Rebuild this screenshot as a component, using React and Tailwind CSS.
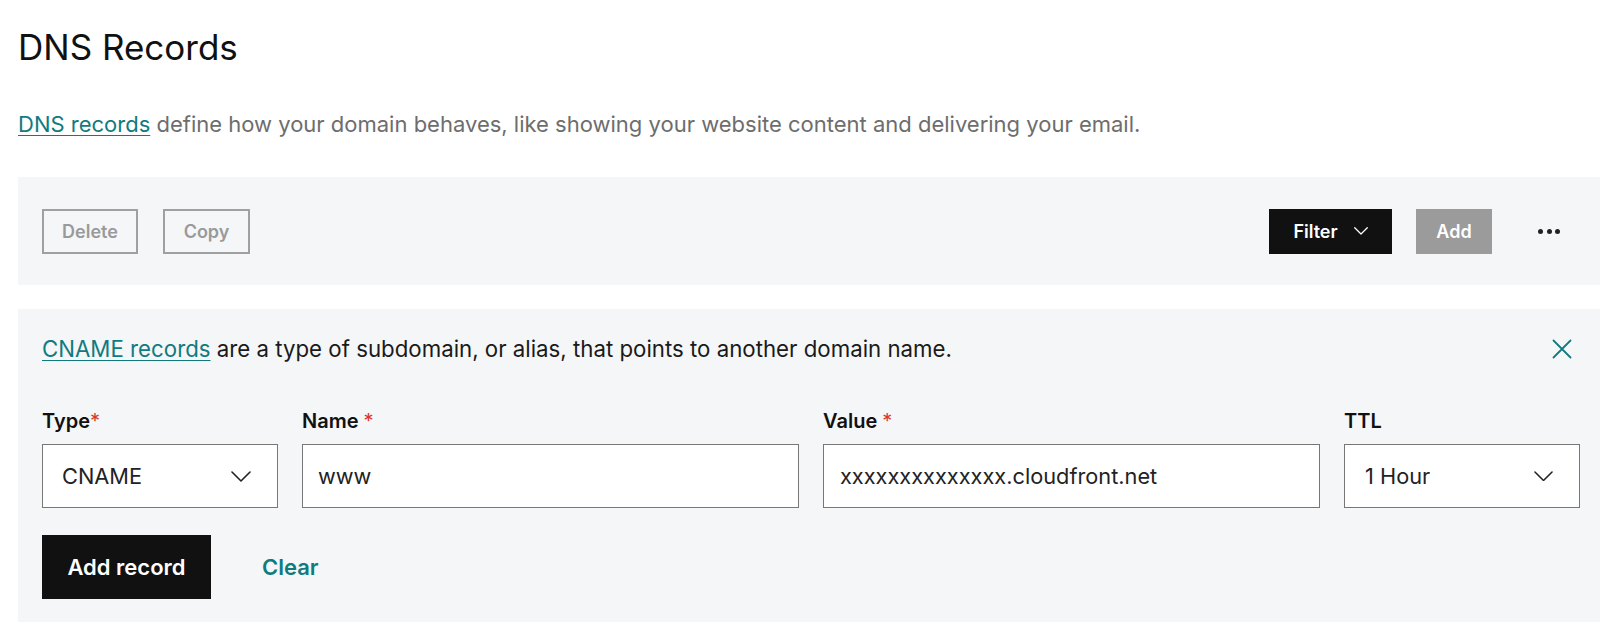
import React from "react";

const Chevron = ({ className = "", stroke = "#222", w = 18, sw = 1.6 }) => (
  <svg width={w} height={w * 0.55} viewBox="0 0 20 11" fill="none" className={className}>
    <path d="M1 1 L10 10 L19 1" stroke={stroke} strokeWidth={sw} strokeLinecap="round" strokeLinejoin="round" />
  </svg>
);

export default function App() {
  return (
    <div className="w-[1600px] h-[630px] overflow-hidden bg-white pl-[18px] pt-[25px] text-[#111]" style={{ fontFamily: "Inter, 'Noto Sans', sans-serif" }}>
      <h1 className="text-[35px] leading-[44px] font-normal">DNS Records</h1>
      <p className="mt-[41px] text-[22px] leading-[28px] text-[#6d6d6d]">
        <a className="text-[#107b7f] underline underline-offset-[3px] decoration-1">DNS records</a> define how your domain behaves, like showing your website content and delivering your email.
      </p>

      <div className="mt-[39px] h-[108px] w-[1582px] bg-[#f5f6f8] flex items-center pl-[24px] pr-[40px]">
        <div className="flex items-center gap-[25px]">
          <button className="w-[96px] h-[45px] border-2 border-[#a0a0a0] text-[#9a9a9a] text-[18px] font-semibold">Delete</button>
          <button className="w-[87px] h-[45px] border-2 border-[#a0a0a0] text-[#9a9a9a] text-[18px] font-semibold">Copy</button>
        </div>
        <div className="ml-auto flex items-center">
          <button className="w-[123px] h-[45px] bg-[#111] text-white text-[18px] font-semibold flex items-center justify-center gap-[16px]">
            Filter <Chevron stroke="#fff" w={14} sw={1.8} />
          </button>
          <button className="ml-[24px] w-[76px] h-[45px] bg-[#9b9b9b] text-white text-[18px] font-semibold">Add</button>
          <div className="ml-[46px] w-[22px] h-[45px] flex items-center justify-between">
            <span className="w-[5px] h-[5px] rounded-full bg-[#222]"></span>
            <span className="w-[5px] h-[5px] rounded-full bg-[#222]"></span>
            <span className="w-[5px] h-[5px] rounded-full bg-[#222]"></span>
          </div>
        </div>
      </div>

      <div className="mt-[24px] w-[1582px] bg-[#f5f6f8] pl-[24px] pr-[20px] pt-[25px] pb-[23px]">
        <div className="flex items-center">
          <p className="text-[22.25px] leading-[30px] text-[#1a1a1a]">
            <a className="text-[#107b7f] underline underline-offset-[3px] decoration-1">CNAME records</a> are a type of subdomain, or alias, that points to another domain name.
          </p>
          <svg width="20" height="20" viewBox="0 0 20 20" className="ml-auto mr-[8px]" fill="none">
            <path d="M1.5 1.5 L18.5 18.5 M18.5 1.5 L1.5 18.5" stroke="#107b7f" strokeWidth="1.8" strokeLinecap="round" />
          </svg>
        </div>

        <div className="mt-[45px] grid grid-cols-[236px_497px_497px_236px] gap-x-[24px]">
          <div>
            <div className="text-[20px] leading-[24px] font-semibold">Type<span className="text-[#d8382b] font-normal">*</span></div>
            <div className="mt-[11px] h-[64px] border border-[#777] bg-white flex items-center pl-[19px] pr-[26px] text-[21.75px] text-[#222]">
              CNAME
              <Chevron className="ml-auto" w={20} />
            </div>
          </div>
          <div>
            <div className="text-[20px] leading-[24px] font-semibold">Name <span className="text-[#d8382b] font-normal">*</span></div>
            <div className="mt-[11px] h-[64px] border border-[#777] bg-white flex items-center px-[15px] text-[21.75px] text-[#222]">www</div>
          </div>
          <div>
            <div className="text-[20px] leading-[24px] font-semibold">Value <span className="text-[#d8382b] font-normal">*</span></div>
            <div className="mt-[11px] h-[64px] border border-[#777] bg-white flex items-center px-[16px] text-[21.75px] text-[#222]">xxxxxxxxxxxxxx.cloudfront.net</div>
          </div>
          <div>
            <div className="text-[20px] leading-[24px] font-semibold">TTL</div>
            <div className="mt-[11px] h-[64px] border border-[#777] bg-white flex items-center pl-[20px] pr-[26px] text-[21.75px] text-[#222]">
              1 Hour
              <Chevron className="ml-auto" w={19} />
            </div>
          </div>
        </div>

        <div className="mt-[27px] flex items-center">
          <button className="w-[169px] h-[64px] bg-[#111] text-white text-[22px] font-semibold">Add record</button>
          <button className="ml-[51px] text-[#107b7f] text-[22px] font-semibold">Clear</button>
        </div>
      </div>
    </div>
  );
}
